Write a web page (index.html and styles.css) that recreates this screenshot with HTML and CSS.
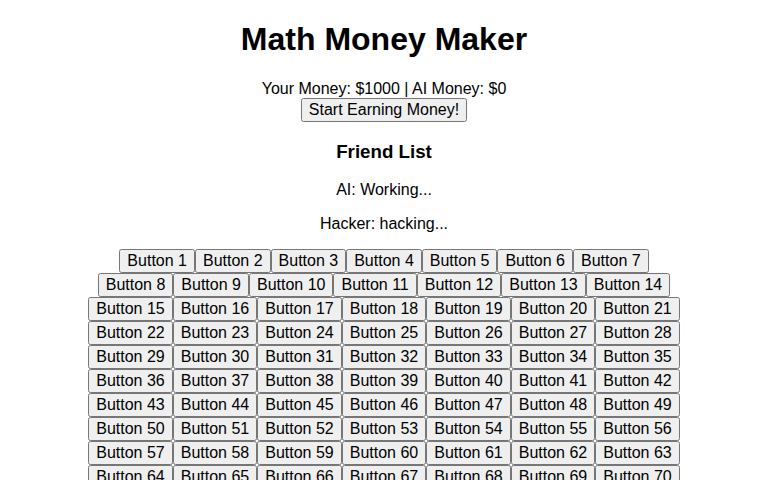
FILE: index.html
```html
<!DOCTYPE html>
<html lang="en">
<head>
<meta charset="utf-8">
<title>Math Money Maker</title>
<link rel="stylesheet" href="styles.css">
</head>
<body class="page">
<h1 class="title">Math Money Maker</h1>
<p class="money">Your Money: $1000 | AI Money: $0<br><button class="btn">Start Earning Money!</button></p>
<h3 class="section">Friend List</h3>
<p class="status">AI: Working...</p>
<p class="status">Hacker: hacking...</p>
<div class="grid"><button class="btn">Button 1</button><button class="btn">Button 2</button><button class="btn">Button 3</button><button class="btn">Button 4</button><button class="btn">Button 5</button><button class="btn">Button 6</button><button class="btn">Button 7</button><button class="btn">Button 8</button><button class="btn">Button 9</button><button class="btn">Button 10</button><button class="btn">Button 11</button><button class="btn">Button 12</button><button class="btn">Button 13</button><button class="btn">Button 14</button><button class="btn">Button 15</button><button class="btn">Button 16</button><button class="btn">Button 17</button><button class="btn">Button 18</button><button class="btn">Button 19</button><button class="btn">Button 20</button><button class="btn">Button 21</button><button class="btn">Button 22</button><button class="btn">Button 23</button><button class="btn">Button 24</button><button class="btn">Button 25</button><button class="btn">Button 26</button><button class="btn">Button 27</button><button class="btn">Button 28</button><button class="btn">Button 29</button><button class="btn">Button 30</button><button class="btn">Button 31</button><button class="btn">Button 32</button><button class="btn">Button 33</button><button class="btn">Button 34</button><button class="btn">Button 35</button><button class="btn">Button 36</button><button class="btn">Button 37</button><button class="btn">Button 38</button><button class="btn">Button 39</button><button class="btn">Button 40</button><button class="btn">Button 41</button><button class="btn">Button 42</button><button class="btn">Button 43</button><button class="btn">Button 44</button><button class="btn">Button 45</button><button class="btn">Button 46</button><button class="btn">Button 47</button><button class="btn">Button 48</button><button class="btn">Button 49</button><button class="btn">Button 50</button><button class="btn">Button 51</button><button class="btn">Button 52</button><button class="btn">Button 53</button><button class="btn">Button 54</button><button class="btn">Button 55</button><button class="btn">Button 56</button><button class="btn">Button 57</button><button class="btn">Button 58</button><button class="btn">Button 59</button><button class="btn">Button 60</button><button class="btn">Button 61</button><button class="btn">Button 62</button><button class="btn">Button 63</button><button class="btn">Button 64</button><button class="btn">Button 65</button><button class="btn">Button 66</button><button class="btn">Button 67</button><button class="btn">Button 68</button><button class="btn">Button 69</button><button class="btn">Button 70</button><button class="btn">Button 71</button><button class="btn">Button 72</button><button class="btn">Button 73</button><button class="btn">Button 74</button><button class="btn">Button 75</button><button class="btn">Button 76</button><button class="btn">Button 77</button><button class="btn">Button 78</button><button class="btn">Button 79</button><button class="btn">Button 80</button><button class="btn">Button 81</button><button class="btn">Button 82</button><button class="btn">Button 83</button><button class="btn">Button 84</button><button class="btn">Button 85</button><button class="btn">Button 86</button><button class="btn">Button 87</button><button class="btn">Button 88</button><button class="btn">Button 89</button><button class="btn">Button 90</button><button class="btn">Button 91</button><button class="btn">Button 92</button><button class="btn">Button 93</button><button class="btn">Button 94</button><button class="btn">Button 95</button><button class="btn">Button 96</button><button class="btn">Button 97</button><button class="btn">Button 98</button><button class="btn">Button 99</button><button class="btn">Button 100</button></div>
</body>
</html>
```
FILE: styles.css
```css
.page {
  margin: 0 8px 8px;
  font-family: "Liberation Sans", Arial, sans-serif;
  font-size: 16px;
  color: #000;
  background: #fff;
  text-align: center;
}
.title {
  font-size: 32px;
  font-weight: bold;
  margin: 21.44px 0;
}
.money {
  margin: 16px 0;
}
.section {
  font-size: 18.72px;
  font-weight: bold;
  margin: 18.72px 0;
}
.status {
  margin: 16px 0;
}
.btn {
  font-family: "Liberation Sans", Arial, sans-serif;
  font-size: 16px;
  margin: 0;
}
.grid {
  width: 600px;
  margin: 0 auto;
  display: flex;
  flex-wrap: wrap;
  justify-content: center;
}
```
